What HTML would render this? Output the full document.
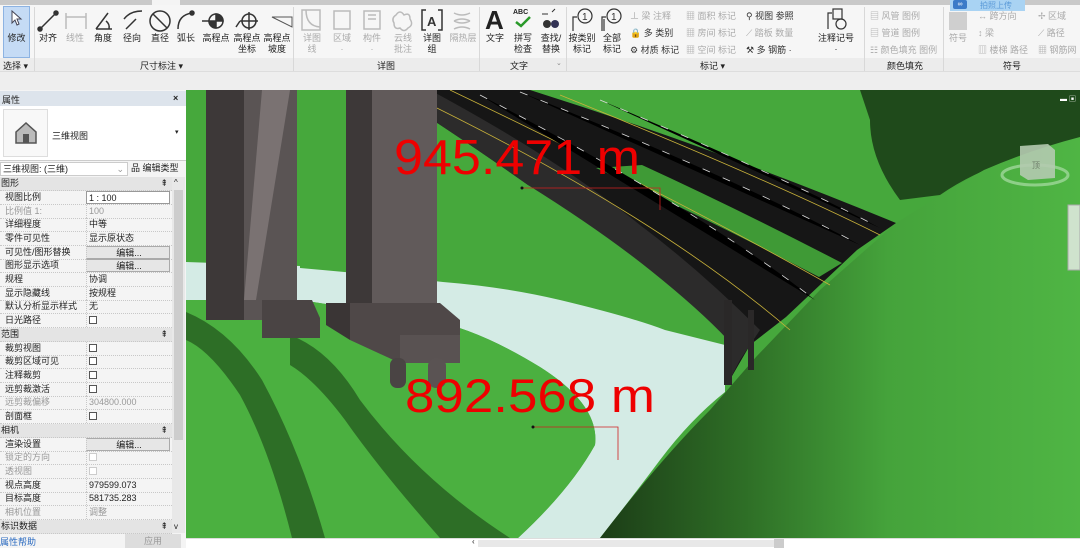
<!DOCTYPE html>
<html><head><meta charset="utf-8"><style>
*{margin:0;padding:0;box-sizing:border-box}
body{width:1080px;height:548px;overflow:hidden;background:#eeeeee;font-family:"Liberation Sans","Noto Sans CJK SC",sans-serif;font-size:9px;color:#222;position:relative}
.a{position:absolute;white-space:nowrap}
.lbl{position:absolute;text-align:center;font-size:9px;line-height:11px;color:#222}
.dis{color:#aaa}
.sm{position:absolute;font-size:9px;color:#333;white-space:nowrap}
.row{position:absolute;left:0;width:172px;height:14px;border-bottom:1px dotted #c8c8c8;font-size:9px;line-height:13px}
.row .k{position:absolute;left:5px}
.row .v{position:absolute;left:86px;width:84px;height:13px;padding-left:2px;border-left:1px dotted #c8c8c8}
.hd{background:#e4e4e4;}
.hd .k{left:1px}
.btn{background:#e6e6e6;border:1px solid #aaa;text-align:center}
.cb{display:inline-block;width:8px;height:8px;border:1px solid #555;background:#fff;margin-top:2px}
.g{color:#999}
</style></head><body>
<div class="a" style="left:0;top:0;width:1080px;height:5px;background:#c9c9c9"></div>
<div class="a" style="left:152px;top:0;width:28px;height:5px;background:#f4f4f4"></div>
<div class="a" style="left:0;top:5px;width:1080px;height:53px;background:#f6f6f6"></div>
<div class="a" style="left:0;top:58px;width:1080px;height:14px;background:#ececec;border-bottom:1px solid #ddd"></div>
<div class="a" style="left:3px;top:6px;width:27px;height:52px;background:#c5dbf5;border:1px solid #8db3e2"></div>
<svg class="a" style="left:9px;top:10px" width="14" height="16"><path d="M3 1 L3 13 L6 10 L8 15 L10 14 L8 9 L12 9 Z" fill="#fff" stroke="#445" stroke-width="1"/></svg>
<div class="lbl" style="left:3px;top:33px;width:27px">修改</div>
<div class="a" style="left:34px;top:7px;width:1px;height:64px;background:#d8d8d8"></div>
<div class="a" style="left:293px;top:7px;width:1px;height:64px;background:#d8d8d8"></div>
<div class="a" style="left:479px;top:7px;width:1px;height:64px;background:#d8d8d8"></div>
<div class="a" style="left:566px;top:7px;width:1px;height:64px;background:#d8d8d8"></div>
<div class="a" style="left:864px;top:7px;width:1px;height:64px;background:#d8d8d8"></div>
<div class="a" style="left:943px;top:7px;width:1px;height:64px;background:#d8d8d8"></div>
<svg class="a" style="left:36px;top:7px" width="260" height="26" fill="none" stroke="#333" stroke-width="1.5">
<path d="M4 22 L20 6"/><circle cx="4" cy="22" r="2" fill="#333"/><circle cx="20" cy="6" r="2" fill="#333"/>
<path d="M30 6 V22 M50 6 V22 M30 10 H50" stroke="#bbb"/>
<path d="M60 22 H76 M60 22 L72 6 M70 14 q4 3 3 8"/>
<path d="M90 22 L100 12 M88 12 q6 -8 18 -8"/>
<circle cx="124" cy="14" r="10"/><path d="M117 7 L131 21"/>
<path d="M142 22 q0 -14 14 -16"/><circle cx="156" cy="6" r="2" fill="#333"/>
<circle cx="180" cy="14" r="7"/><path d="M180 7 A7 7 0 0 1 187 14 L180 14 Z M180 14 L180 21 A7 7 0 0 1 173 14 Z" fill="#333"/><path d="M166 14 H173"/>
<circle cx="213" cy="14" r="7"/><path d="M213 5 V23 M204 14 H222 M200 20 l4 -6"/>
<path d="M236 10 L256 20 V10 Z" stroke="#555" stroke-width="1"/>
</svg>
<div class="lbl" style="left:36px;top:33px;width:24px">对齐</div>
<div class="lbl dis" style="left:63px;top:33px;width:24px">线性</div>
<div class="lbl" style="left:91px;top:33px;width:24px">角度</div>
<div class="lbl" style="left:120px;top:33px;width:24px">径向</div>
<div class="lbl" style="left:148px;top:33px;width:24px">直径</div>
<div class="lbl" style="left:174px;top:33px;width:24px">弧长</div>
<div class="lbl" style="left:201px;top:33px;width:30px">高程点</div>
<div class="lbl" style="left:232px;top:33px;width:30px">高程点<br>坐标</div>
<div class="lbl" style="left:262px;top:33px;width:30px">高程点<br>坡度</div>
<svg class="a" style="left:298px;top:7px" width="180" height="26" fill="none" stroke="#bbb" stroke-width="1.5">
<rect x="4" y="3" width="18" height="20"/><path d="M8 3 q0 16 14 17"/>
<rect x="36" y="4" width="16" height="18"/>
<rect x="66" y="4" width="16" height="18"/><path d="M70 8h8M70 12h8"/>
<path d="M98 8 q4 -6 8 0 q6 -3 6 4 q4 6 -2 9 q-4 5 -8 0 q-6 2 -6 -5 q-3 -5 2 -8z"/>
<path d="M128 3 h-4 v20 h4 M140 3 h4 v20 h-4" stroke="#333"/><text x="129" y="19" font-size="13" font-weight="bold" fill="#333" stroke="none" font-family="Liberation Sans">A</text>
<path d="M156 6 q8 4 16 0 M156 14 q8 -4 16 0 M156 14 q8 4 16 0 M156 22 q8 -4 16 0"/>
</svg>
<div class="lbl dis" style="left:300px;top:33px;width:24px">详图<br>线</div>
<div class="lbl dis" style="left:330px;top:33px;width:24px">区域<br>·</div>
<div class="lbl dis" style="left:360px;top:33px;width:24px">构件<br>·</div>
<div class="lbl dis" style="left:391px;top:33px;width:24px">云线<br>批注</div>
<div class="lbl" style="left:420px;top:33px;width:24px">详图<br>组</div>
<div class="lbl dis" style="left:449px;top:33px;width:28px">隔热层</div>
<div class="a" style="left:485px;top:5px;font-size:26px;font-weight:bold;color:#222;font-family:'Liberation Sans',sans-serif">A</div>
<div class="a" style="left:513px;top:9px;font-size:7px;font-weight:bold">ABC</div>
<svg class="a" style="left:514px;top:16px" width="18" height="12"><path d="M2 6 L7 10 L16 1" stroke="#2a9a2a" stroke-width="2.5" fill="none"/></svg>
<svg class="a" style="left:540px;top:8px" width="20" height="22"><path d="M2 6 h6 M12 4 l3 -3" stroke="#333" fill="none"/><circle cx="7" cy="16" r="4" fill="#333"/><circle cx="15" cy="16" r="4" fill="#335"/></svg>
<div class="lbl" style="left:484px;top:33px;width:22px">文字</div>
<div class="lbl" style="left:511px;top:33px;width:24px">拼写<br>检查</div>
<div class="lbl" style="left:538px;top:33px;width:26px">查找/<br>替换</div>
<svg class="a" style="left:569px;top:7px" width="60" height="26" fill="none" stroke="#333" stroke-width="1.2">
<path d="M4 24 V10 H8"/><circle cx="16" cy="9" r="7"/><text x="13" y="13" font-size="10" fill="#333" stroke="none">1</text>
<path d="M33 24 V10 H37 M35 24 V12"/><circle cx="45" cy="9" r="7"/><text x="42" y="13" font-size="10" fill="#333" stroke="none">1</text>
</svg>
<div class="lbl" style="left:568px;top:33px;width:28px">按类别<br>标记</div>
<div class="lbl" style="left:599px;top:33px;width:26px">全部<br>标记</div>
<div class="sm" style="left:630px;top:9px;color:#aaa">⊥ 梁 注释</div>
<div class="sm" style="left:630px;top:26px">🔒 多 类别</div>
<div class="sm" style="left:630px;top:43px">⚙ 材质 标记</div>
<div class="sm" style="left:686px;top:9px;color:#aaa">▦ 面积 标记</div>
<div class="sm" style="left:686px;top:26px;color:#aaa">▦ 房间 标记</div>
<div class="sm" style="left:686px;top:43px;color:#aaa">▦ 空间 标记</div>
<div class="sm" style="left:746px;top:9px">⚲ 视图 参照</div>
<div class="sm" style="left:746px;top:26px;color:#aaa">⟋ 踏板 数量</div>
<div class="sm" style="left:746px;top:43px">⚒ 多 钢筋 ·</div>
<svg class="a" style="left:824px;top:7px" width="26" height="26" fill="none" stroke="#333" stroke-width="1.2"><path d="M4 22 V6 H8"/><rect x="9" y="2" width="9" height="10"/><circle cx="17" cy="17" r="5"/></svg>
<div class="lbl" style="left:816px;top:33px;width:40px">注释记号<br>·</div>
<div class="sm" style="left:870px;top:9px;color:#aaa">▤ 风管 图例</div>
<div class="sm" style="left:870px;top:26px;color:#aaa">▤ 管道 图例</div>
<div class="sm" style="left:870px;top:43px;color:#aaa">☷ 颜色填充 图例</div>
<div class="a" style="left:949px;top:12px;width:18px;height:18px;background:#cfcfcf"></div>
<div class="lbl dis" style="left:946px;top:33px;width:24px">符号</div>
<div class="sm" style="left:978px;top:9px;color:#aaa">↔ 跨方向</div>
<div class="sm" style="left:978px;top:26px;color:#aaa">↕ 梁</div>
<div class="sm" style="left:978px;top:43px;color:#aaa">▥ 楼梯 路径</div>
<div class="sm" style="left:1038px;top:9px;color:#aaa">✢ 区域</div>
<div class="sm" style="left:1038px;top:26px;color:#aaa">⟋ 路径</div>
<div class="sm" style="left:1038px;top:43px;color:#aaa">▦ 钢筋网</div>
<div class="a" style="left:950px;top:0;width:75px;height:11px;background:#a9d3f3"></div>
<div class="a" style="left:953px;top:0;width:14px;height:9px;background:#3b7bc8;border-radius:2px;color:#fff;font-size:7px;line-height:9px;text-align:center">∞</div>
<div class="a" style="left:980px;top:0;font-size:8px;color:#5a9ad8">拍照上传</div>
<div class="a" style="left:3px;top:59px;font-size:9px">选择 ▾</div>
<div class="a" style="left:140px;top:59px;font-size:9px">尺寸标注 ▾</div>
<div class="a" style="left:377px;top:59px;font-size:9px">详图</div>
<div class="a" style="left:510px;top:59px;font-size:9px">文字</div>
<div class="a" style="left:556px;top:59px;font-size:7px;color:#888">⌄</div>
<div class="a" style="left:700px;top:59px;font-size:9px">标记 ▾</div>
<div class="a" style="left:887px;top:59px;font-size:9px">颜色填充</div>
<div class="a" style="left:1003px;top:59px;font-size:9px">符号</div>

<div class="a" style="left:0;top:90px;width:186px;height:458px;background:#f4f4f4"></div>
<div class="a" style="left:0;top:91px;width:186px;height:15px;background:#dde4ec;padding:2px 2px;font-size:9px">属性<span style="position:absolute;left:173px;font-weight:bold">×</span></div>
<div class="a" style="left:0;top:106px;width:186px;height:55px;background:#fff;border-bottom:1px solid #ccc"></div>
<div class="a" style="left:3px;top:109px;width:45px;height:48px;border:1px solid #ddd;background:#f8f8f8"></div>
<svg class="a" style="left:13px;top:120px" width="26" height="26"><path d="M3 12 L13 3 L23 12 V23 H3 Z" fill="#bbb" stroke="#555" stroke-width="1.5"/><rect x="10" y="14" width="6" height="9" fill="#555"/></svg>
<div class="a" style="left:52px;top:129px;font-size:9px">三维视图</div>
<div class="a" style="left:175px;top:128px;font-size:7px">▾</div>
<div class="a" style="left:0;top:162px;width:128px;height:14px;background:#fff;border:1px solid #ccc;font-size:9px;line-height:12px;padding-left:2px">三维视图: (三维)<span style="position:absolute;right:3px;color:#999">⌄</span></div>
<div class="a" style="left:131px;top:162px;font-size:9px;line-height:13px">品 编辑类型</div>
<div class="a" style="left:172px;top:177px;width:13px;height:356px;background:#e8e8e8"></div>
<div class="a" style="left:174px;top:178px;font-size:8px">^</div>
<div class="a" style="left:174px;top:190px;width:9px;height:250px;background:#cdcdcd"></div>
<div class="a" style="left:174px;top:522px;font-size:8px">v</div>
<div style="position:absolute;left:0;top:177px;width:172px;background:#fff">
<div class="row hd" style="top:0"><span class="k">图形</span><span style="position:absolute;right:4px">⇞</span></div>
<div class="row" style="top:14px"><span class="k">视图比例</span><span class="v" style="border:1px solid #999;background:#fff">1 : 100</span></div>
<div class="row" style="top:28px"><span class="k g">比例值 1:</span><span class="v g">100</span></div>
<div class="row" style="top:41px"><span class="k">详细程度</span><span class="v">中等</span></div>
<div class="row" style="top:55px"><span class="k">零件可见性</span><span class="v">显示原状态</span></div>
<div class="row" style="top:69px"><span class="k">可见性/图形替换</span><span class="v btn">编辑...</span></div>
<div class="row" style="top:82px"><span class="k">图形显示选项</span><span class="v btn">编辑...</span></div>
<div class="row" style="top:96px"><span class="k">规程</span><span class="v">协调</span></div>
<div class="row" style="top:110px"><span class="k">显示隐藏线</span><span class="v">按规程</span></div>
<div class="row" style="top:123px"><span class="k">默认分析显示样式</span><span class="v">无</span></div>
<div class="row" style="top:137px"><span class="k">日光路径</span><span class="v"><i class="cb"></i></span></div>
<div class="row hd" style="top:151px"><span class="k">范围</span><span style="position:absolute;right:4px">⇞</span></div>
<div class="row" style="top:165px"><span class="k">裁剪视图</span><span class="v"><i class="cb"></i></span></div>
<div class="row" style="top:178px"><span class="k">裁剪区域可见</span><span class="v"><i class="cb"></i></span></div>
<div class="row" style="top:192px"><span class="k">注释裁剪</span><span class="v"><i class="cb"></i></span></div>
<div class="row" style="top:206px"><span class="k">远剪裁激活</span><span class="v"><i class="cb"></i></span></div>
<div class="row" style="top:219px"><span class="k g">远剪裁偏移</span><span class="v g">304800.000</span></div>
<div class="row" style="top:233px"><span class="k">剖面框</span><span class="v"><i class="cb"></i></span></div>
<div class="row hd" style="top:247px"><span class="k">相机</span><span style="position:absolute;right:4px">⇞</span></div>
<div class="row" style="top:261px"><span class="k">渲染设置</span><span class="v btn">编辑...</span></div>
<div class="row" style="top:274px"><span class="k g">锁定的方向</span><span class="v"><i class="cb" style="border-color:#ccc"></i></span></div>
<div class="row" style="top:288px"><span class="k g">透视图</span><span class="v"><i class="cb" style="border-color:#ccc"></i></span></div>
<div class="row" style="top:302px"><span class="k">视点高度</span><span class="v">979599.073</span></div>
<div class="row" style="top:315px"><span class="k">目标高度</span><span class="v">581735.283</span></div>
<div class="row" style="top:329px"><span class="k g">相机位置</span><span class="v g">调整</span></div>
<div class="row hd" style="top:343px"><span class="k">标识数据</span><span style="position:absolute;right:4px">⇞</span></div>
</div>
<div class="a" style="left:0;top:535px;font-size:9px;color:#2a6ac0">属性帮助</div>
<div class="a" style="left:125px;top:534px;width:56px;height:14px;background:#ddd;color:#999;text-align:center;font-size:9px;line-height:14px">应用</div>

<svg class="a" style="left:186px;top:90px" width="894" height="448" viewBox="186 90 894 448">
<defs>
<linearGradient id="hill" x1="0" y1="0" x2="1" y2="0"><stop offset="0" stop-color="#1c3d17"/><stop offset="0.3" stop-color="#2e6e26"/><stop offset="0.6" stop-color="#45a33b"/><stop offset="1" stop-color="#4fb544"/></linearGradient>
</defs>
<rect x="186" y="90" width="894" height="448" fill="#46a83c"/>
<path d="M860 90 H1080 V140 Q990 160 940 195 L900 200 Q870 160 870 120 Z" fill="#1f4a1b"/>
<path d="M186 262 L300 266 L300 300 L186 300 Z" fill="#d4ebe5"/>
<path d="M300 268 Q380 275 443 282 Q505 287 560 300 Q631 317 665 330 L725 345 L725 392 Q690 420 660 460 Q630 500 600 538 L518 538 Q570 490 595 445 Q600 405 540 367 Q480 330 430 320 L300 300 Z" fill="#d4ebe5"/>
<!-- inner bend green -->
<path d="M186 300 L300 300 L430 320 Q480 330 540 367 Q600 405 595 445 Q570 490 518 538 L186 538 Z" fill="#4bb040"/>
<path d="M186 312 Q230 330 262 380 Q300 450 325 538 L292 538 Q270 450 240 395 Q210 350 186 340 Z" fill="#2d6e26"/>
<path d="M290 335 Q330 350 360 400 Q420 480 510 538 L440 538 Q380 470 345 420 Q315 380 290 365 Z" fill="#2d6e26"/>
<path d="M600 538 Q660 460 710 410 L756 357 L820 290 L896 223 Q940 195 984 170 Q1030 150 1080 137 V538 Z" fill="url(#hill)"/>
<path d="M317 90 L530 90 Q720 150 896 223 L857 250 Q820 285 786 317 L750 345 L728 383 L728 340 Q690 295 640 255 Q590 215 528 185 Q450 130 386 90 Z" fill="#161616"/>
<path d="M386 90 Q450 130 528 185 Q600 230 650 270 Q700 310 728 340 L728 383 L740 360 L760 330 Q700 270 640 225 Q560 160 430 90 Z" fill="#2c2b2b"/>
<path d="M596 168 Q700 215 819 277 L842 263 Q740 210 642 165 Z" fill="#3f9a36"/>
<g stroke="#c9b23a" stroke-width="0.8" fill="none"><path d="M400 90 Q650 210 790 330"/><path d="M450 90 Q680 200 830 285"/><path d="M560 95 Q770 180 880 235"/></g>
<g stroke="#ddd" stroke-width="0.8" stroke-dasharray="8 14"><path d="M480 95 Q700 210 815 300"/><path d="M600 100 Q790 180 880 228"/><path d="M520 92 Q740 180 860 245"/></g>
<rect x="206" y="90" width="38" height="230" fill="#3d3838"/>
<path d="M244 90 H297 V320 H244 Z" fill="#5a5454"/>
<path d="M262 90 L290 90 L256 300 L244 300 Z" fill="#7a7272"/>
<path d="M262 300 H312 L320 318 V338 H262 Z" fill="#4a4444"/>
<rect x="346" y="90" width="26" height="215" fill="#3d3838"/>
<path d="M372 90 H437 V305 H372 Z" fill="#615a5a"/>
<path d="M326 303 L350 303 V340 L326 325 Z" fill="#3a3535"/>
<path d="M350 303 H440 L460 320 V363 H400 L350 340 Z" fill="#4f4848"/>
<path d="M400 335 H460 V363 H400 Z" fill="#595252"/>
<rect x="390" y="358" width="16" height="30" rx="7" fill="#4a4444"/>
<rect x="428" y="358" width="18" height="30" rx="8" fill="#5a5353"/>
<rect x="724" y="300" width="8" height="85" fill="#2a2828"/>
<rect x="748" y="310" width="6" height="60" fill="#2a2828"/>
<path d="M522 188 H660 V210" stroke="#d02020" stroke-width="0.8" fill="none"/>
<circle cx="522" cy="188" r="1.5" fill="#111"/>
<path d="M533 427 H618 V460" stroke="#d02020" stroke-width="0.8" fill="none"/>
<circle cx="533" cy="427" r="1.5" fill="#111"/>
<text x="394" y="174" font-family="Liberation Sans" font-size="49" fill="#ee0000" textLength="246" lengthAdjust="spacingAndGlyphs">945.471 m</text>
<text x="405" y="412" font-family="Liberation Sans" font-size="47" fill="#ee0000" textLength="250" lengthAdjust="spacingAndGlyphs">892.568 m</text>
<ellipse cx="1035" cy="175" rx="33" ry="10" fill="none" stroke="#9fd79a" stroke-width="3" opacity="0.8"/>
<path d="M1020 146 L1048 144 L1055 150 V178 L1028 180 L1020 175 Z" fill="#b4cab0" opacity="0.9"/>
<text x="1032" y="168" font-size="8" fill="#6a7a66">顶</text>
<rect x="1068" y="205" width="12" height="65" fill="#cfe3cd" stroke="#aaa"/>
<text x="1060" y="101" font-size="7" fill="#fff">▬ ▣</text>
</svg>
<div class="a" style="left:186px;top:538px;width:894px;height:10px;background:#fff;border-top:1px solid #ddd"></div>
<div class="a" style="left:472px;top:537px;font-size:8px">‹</div>
<div class="a" style="left:478px;top:540px;width:300px;height:7px;background:#e8e8e8"></div>
<div class="a" style="left:774px;top:539px;width:10px;height:9px;background:#ccc"></div>
</body></html>
